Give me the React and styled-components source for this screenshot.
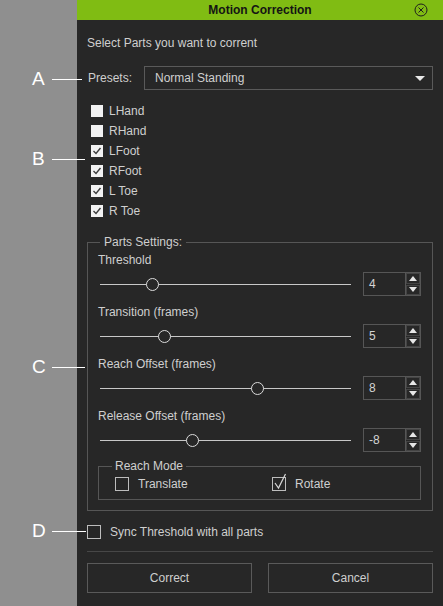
import React from 'react';
import styled, { createGlobalStyle } from 'styled-components';

const GlobalStyle = createGlobalStyle`
  html, body {
    margin: 0;
    padding: 0;
    background: #8f8f8f;
  }
  body {
    font-family: "Liberation Sans", Arial, sans-serif;
    font-size: 12px;
  }
`;

const Page = styled.div`
  position: relative;
  display: flex;
  width: 443px;
  height: 606px;
  overflow: hidden;
`;

const Gutter = styled.div`
  flex: none;
  width: 77px;
  background: #8f8f8f;
`;

const Dialog = styled.div`
  flex: 1;
  display: flex;
  flex-direction: column;
  background: #272727;
  color: #cfcfcf;
`;

const TitleBar = styled.div`
  height: 20px;
  background: #80bc13;
  display: grid;
  grid-template-columns: 1fr auto 1fr;
  align-items: center;
`;

const Title = styled.div`
  grid-column: 2;
  font-weight: bold;
  color: #141414;
`;

const CloseIcon = styled.svg`
  justify-self: end;
  margin-right: 15px;
`;

const Body = styled.div`
  display: flex;
  flex-direction: column;
  padding: 0 10px;
`;

const Intro = styled.div`
  margin-top: 16px;
  line-height: 14px;
`;

const PresetRow = styled.div`
  display: flex;
  align-items: center;
  margin-top: 16px;
  height: 24px;
`;

const PresetLabel = styled.span`
  width: 56px;
  padding-left: 1px;
`;

const Dropdown = styled.div`
  flex: 1;
  height: 24px;
  box-sizing: border-box;
  border: 1px solid #5a5a5a;
  display: flex;
  align-items: center;
  justify-content: space-between;
  padding: 0 7px 0 10px;
`;

const Caret = styled.span`
  width: 0;
  height: 0;
  border-left: 5px solid transparent;
  border-right: 5px solid transparent;
  border-top: 5px solid #e8e8e8;
`;

const PartList = styled.div`
  display: flex;
  flex-direction: column;
  margin-top: 11px;
`;

const PartRow = styled.label`
  display: flex;
  align-items: center;
  height: 20px;
`;

const PartBox = styled.span`
  width: 12px;
  height: 12px;
  margin-left: 4px;
  margin-right: 6px;
  background: #f2f2f2;
  display: flex;
  align-items: center;
  justify-content: center;
`;

const Group = styled.fieldset`
  margin: ${(p) => p.$top}px 0 0;
  padding: ${(p) => p.$pad};
  border: 1px solid #565656;
  min-width: 0;
`;

const Legend = styled.legend`
  padding: 0 ${(p) => p.$pad}px;
  margin-left: ${(p) => p.$shift}px;
  line-height: 14px;
  color: #cfcfcf;
`;

const Setting = styled.div`
  display: flex;
  flex-direction: column;
  margin-top: ${(p) => (p.$first ? 0 : 9)}px;
`;

const SettingLabel = styled.div`
  line-height: 14px;
`;

const SliderRow = styled.div`
  display: flex;
  align-items: center;
  margin-top: 5px;
  height: 24px;
`;

const Track = styled.div`
  position: relative;
  flex: 1;
  height: 14px;
  margin-left: 2px;
  &::before {
    content: '';
    position: absolute;
    left: 0;
    right: 0;
    top: 7px;
    height: 1px;
    background: #c8c8c8;
  }
`;

const Knob = styled.span`
  position: absolute;
  top: 1px;
  width: 11px;
  height: 11px;
  margin-left: -7px;
  border: 1.5px solid #dcdcdc;
  border-radius: 50%;
  background: #272727;
`;

const Spin = styled.div`
  display: flex;
  width: 58px;
  height: 24px;
  box-sizing: border-box;
  margin-left: 12px;
  border: 1px solid #565656;
`;

const SpinValue = styled.span`
  flex: 1;
  display: flex;
  align-items: center;
  padding-left: 5px;
  color: #d4d4d4;
`;

const SpinButtons = styled.div`
  display: flex;
  flex-direction: column;
  gap: 1px;
  width: 14px;
  border-left: 1px solid #565656;
`;

const SpinButton = styled.span`
  flex: 1;
  display: flex;
  align-items: center;
  justify-content: center;
  border: 1px solid #444;
  &::after {
    content: '';
    border-left: 4px solid transparent;
    border-right: 4px solid transparent;
    ${(p) => (p.$down ? 'border-top' : 'border-bottom')}: 5px solid #e6e6e6;
  }
`;

const ModeRow = styled.div`
  display: flex;
  align-items: center;
  height: 14px;
`;

const ModeOption = styled.label`
  display: flex;
  align-items: center;
  width: ${(p) => p.$width || 'auto'};
`;

const HollowBox = styled.span`
  flex: none;
  width: 14px;
  height: 14px;
  box-sizing: border-box;
  border: 1px solid #bdbdbd;
  margin-right: 9px;
`;

const SyncRow = styled.label`
  display: flex;
  align-items: center;
  margin-top: 14px;
  height: 14px;
`;

const Separator = styled.div`
  margin-top: 12px;
  height: 1px;
  background: #474747;
`;

const Buttons = styled.div`
  display: flex;
  gap: 16px;
  margin-top: 11px;
`;

const Button = styled.button`
  flex: 1;
  height: 30px;
  background: transparent;
  border: 1px solid #5a5a5a;
  color: #cfcfcf;
  font-family: inherit;
  font-size: 12px;
`;

const Callout = styled.div`
  position: absolute;
  left: 32px;
  top: ${(p) => p.$y - 11}px;
  display: flex;
  align-items: center;
  height: 22px;
  color: #ffffff;
  font-size: 19px;
`;

const CalloutLetter = styled.span`
  width: 20px;
`;

const CalloutLine = styled.span`
  width: ${(p) => p.$len}px;
  height: 1px;
  background: #ffffff;
`;

const parts = [
  { name: 'LHand', on: false },
  { name: 'RHand', on: false },
  { name: 'LFoot', on: true },
  { name: 'RFoot', on: true },
  { name: 'L Toe', on: true },
  { name: 'R Toe', on: true },
];

const settings = [
  { label: 'Threshold', value: '4', pct: 21.1 },
  { label: 'Transition (frames)', value: '5', pct: 25.9 },
  { label: 'Reach Offset (frames)', value: '8', pct: 62.9 },
  { label: 'Release Offset (frames)', value: '-8', pct: 37.1 },
];

const callouts = [
  { letter: 'A', y: 79, len: 30 },
  { letter: 'B', y: 159, len: 33 },
  { letter: 'C', y: 367, len: 33 },
  { letter: 'D', y: 531, len: 34 },
];

function Check() {
  return (
    <svg width="10" height="10" viewBox="0 0 10 10">
      <path d="M1.5 5 L4 7.5 L8.5 2" fill="none" stroke="#3c3c3c" strokeWidth="1.4" />
    </svg>
  );
}

function RotateBox() {
  return (
    <svg width="16" height="18" viewBox="0 0 16 18" style={{ marginRight: 7, marginTop: -4 }}>
      <rect x="0.5" y="4.5" width="13" height="13" fill="none" stroke="#bdbdbd" />
      <path d="M3 10 L6.5 15 L13.5 1" fill="none" stroke="#d8d8d8" strokeWidth="1.2" />
    </svg>
  );
}

export default function App() {
  return (
    <Page>
      <GlobalStyle />
      <Gutter />
      <Dialog>
        <TitleBar>
          <Title>Motion Correction</Title>
          <CloseIcon width="14" height="14" viewBox="0 0 14 14">
            <circle cx="7" cy="7" r="6" fill="none" stroke="#1e1e1e" strokeWidth="1" />
            <path d="M4.5 4.5 L9.5 9.5 M9.5 4.5 L4.5 9.5" stroke="#1e1e1e" strokeWidth="1" />
          </CloseIcon>
        </TitleBar>
        <Body>
          <Intro>Select Parts you want to corrent</Intro>
          <PresetRow>
            <PresetLabel>Presets:</PresetLabel>
            <Dropdown>
              <span>Normal Standing</span>
              <Caret />
            </Dropdown>
          </PresetRow>
          <PartList>
            {parts.map((p) => (
              <PartRow key={p.name}>
                <PartBox>{p.on && <Check />}</PartBox>
                {p.name}
              </PartRow>
            ))}
          </PartList>
          <Group $top={14} $pad="4px 11px 10px 10px">
            <Legend $pad={4} $shift={2}>Parts Settings:</Legend>
            {settings.map((s, i) => (
              <Setting key={s.label} $first={i === 0}>
                <SettingLabel>{s.label}</SettingLabel>
                <SliderRow>
                  <Track>
                    <Knob style={{ left: `${s.pct}%` }} />
                  </Track>
                  <Spin>
                    <SpinValue>{s.value}</SpinValue>
                    <SpinButtons>
                      <SpinButton />
                      <SpinButton $down />
                    </SpinButtons>
                  </Spin>
                </SliderRow>
              </Setting>
            ))}
            <Group $top={7} $pad="4px 10px 8px 16px">
              <Legend $pad={3} $shift={-3}>Reach Mode</Legend>
              <ModeRow>
                <ModeOption $width="157px">
                  <HollowBox />
                  Translate
                </ModeOption>
                <ModeOption>
                  <RotateBox />
                  Rotate
                </ModeOption>
              </ModeRow>
            </Group>
          </Group>
          <SyncRow>
            <HollowBox />
            Sync Threshold with all parts
          </SyncRow>
          <Separator />
          <Buttons>
            <Button>Correct</Button>
            <Button>Cancel</Button>
          </Buttons>
        </Body>
      </Dialog>
      {callouts.map((c) => (
        <Callout key={c.letter} $y={c.y}>
          <CalloutLetter>{c.letter}</CalloutLetter>
          <CalloutLine $len={c.len} />
        </Callout>
      ))}
    </Page>
  );
}
